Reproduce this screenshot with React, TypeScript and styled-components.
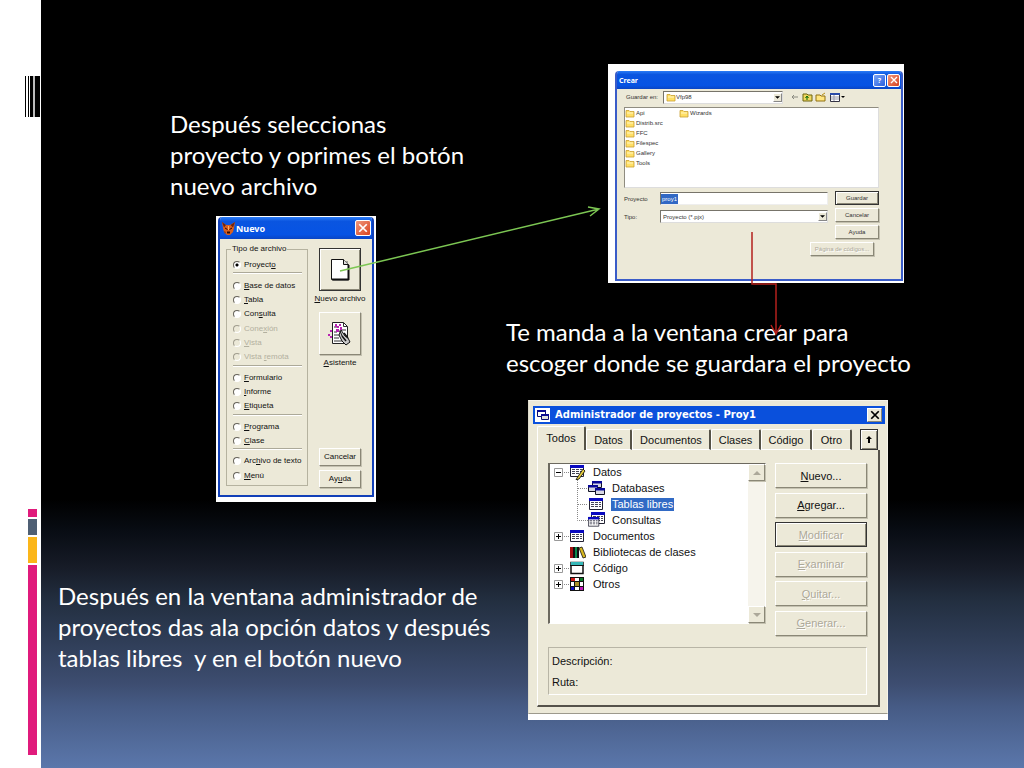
import React from "react";
import styled, { createGlobalStyle, css } from "styled-components";

const face = "#ece9d8";
const ui = '"Liberation Sans", Arial, sans-serif';

const Global = createGlobalStyle`
  *, *::before, *::after { box-sizing: border-box; }
  body { margin: 0; background: #000; }
  button, input, select { font: inherit; color: inherit; margin: 0; }
  ul { list-style: none; margin: 0; padding: 0; }
  u { text-underline-offset: 1px; }
`;

const Slide = styled.div`
  display: flex;
  min-height: 100vh;
  background: linear-gradient(#000 0%, #000 65%, #080c13 69%, #171c28 74%, #222e3f 78%, #2e3c55 83%, #3d4d70 89%, #465b85 92%, #5b77ab 100%);
`;
const Rail = styled.aside`
  display: flex;
  flex-direction: column;
  flex: 0 0 41px;
  padding: 76px 0 13px 25px;
  background: #fff;
`;
const Barcode = styled.svg`
  display: block;
  width: 16px;
  height: 41px;
`;
const Stripes = styled.div`
  display: flex;
  flex-direction: column;
  gap: 2px;
  width: 9px;
  margin: auto 0 0 3px;
`;
const Stripe = styled.div<{ $color: string; $h: number }>`
  height: ${(p) => p.$h}px;
  background: ${(p) => p.$color};
`;
const Stage = styled.main`
  position: relative;
  flex: 1;
  display: grid;
  grid-template-columns: 465fr 518fr;
  align-items: start;
`;
const Column = styled.section<{ $top: number }>`
  display: flex;
  flex-direction: column;
  align-items: flex-start;
  padding-top: ${(p) => p.$top}px;
`;
const Note = styled.p<{ $left?: number; $top?: number }>`
  margin: ${(p) => p.$top ?? 0}px 0 0 ${(p) => p.$left ?? 0}px;
  color: #fff;
  font: 24px/31px Lato, "Open Sans", sans-serif;
  white-space: pre;
`;
const Arrows = styled.svg`
  position: absolute;
  inset: 0;
  width: 100%;
  height: 100%;
  pointer-events: none;
`;

/* Shared window parts */
const raised = css`
  border: 1px solid;
  border-color: #fff #8a8776 #8a8776 #fff;
  box-shadow: 1px 1px 0 #c4c1b0;
`;
const Button = styled.button<{ $h: number; $w?: number; $main?: boolean }>`
  display: flex;
  align-items: center;
  justify-content: center;
  flex: none;
  height: ${(p) => p.$h}px;
  width: ${(p) => (p.$w ? `${p.$w}px` : "100%")};
  padding: 0;
  background: ${face};
  white-space: nowrap;
  ${raised}
  ${(p) => p.$main && "border-color: #333; box-shadow: inset 1px 1px 0 #fff, inset -1px -1px 0 #8a8776;"}
  &:disabled { color: #aca899; text-shadow: 1px 1px 0 #fff; }
`;
const TitleBar = styled.header<{ $h: number; $size: number }>`
  display: flex;
  align-items: center;
  height: ${(p) => p.$h}px;
  color: #fff;
  background: linear-gradient(#2a7bf5 0%, #0a55e0 20%, #0653e4 80%, #0a45c4 100%);
  font: bold ${(p) => p.$size}px/1 "Noto Sans", sans-serif;
`;
const Title = styled.h2`
  flex: 1;
  margin: 0;
  font: inherit;
`;
const XpKey = styled.button<{ $red?: boolean; $s: number }>`
  display: grid;
  place-items: center;
  width: ${(p) => p.$s}px;
  height: ${(p) => p.$s}px;
  padding: 0;
  border: 1px solid #fff;
  border-radius: 2px;
  background: ${(p) => (p.$red ? "linear-gradient(135deg, #f0977c, #d8431f)" : "linear-gradient(135deg, #7ba6f5, #2a5fe0)")};
  color: #fff;
`;

/* Nuevo */
const NewShot = styled.div`
  width: 160px;
  margin: 15px 0 0 175px;
  padding: 1px 2px 5px;
  background: #fff;
`;
const NewWindow = styled.article`
  border: 2px solid #1240b8;
  border-top: 0;
  border-radius: 4px 4px 0 0;
  overflow: hidden;
  background: ${face};
  font: 8px/10px ${ui};
  color: #111;
`;
const NewTitle = styled(TitleBar)`
  padding: 0 1px 0 2px;
  gap: 1px;
`;
const NewBody = styled.div`
  display: flex;
  justify-content: space-between;
  height: 256px;
  padding: 5px 5px 7px 6px;
`;
const Kinds = styled.fieldset`
  display: flex;
  flex-direction: column;
  width: 82px;
  height: 242px;
  margin: 0;
  padding: 4px 5px 2px 6px;
  border: 1px solid #b5b29f;
`;
const KindsLegend = styled.legend`
  margin-left: -2px;
  padding: 0 1px;
`;
const KindGroup = styled.div<{ $n: number }>`
  display: flex;
  flex-direction: column;
  flex: ${(p) => p.$n} 0 auto;
  & + & { padding-top: 5px; border-top: 1px solid #aca999; box-shadow: inset 0 1px 0 #fff; }
`;
const Kind = styled.label<{ $off?: boolean }>`
  display: flex;
  align-items: center;
  flex: 1 0 14px;
  gap: 3px;
  white-space: nowrap;
  color: ${(p) => (p.$off ? "#b3b09f" : "#111")};
`;
const Radio = styled.input`
  appearance: none;
  flex: none;
  width: 8px;
  height: 8px;
  border: 1px solid;
  border-color: #66635a #fff #fff #66635a;
  border-radius: 50%;
  background: #fff;
  &:checked { background: radial-gradient(circle, #000 0 1px, #fff 2px); }
  &:disabled { background: ${face}; border-color: #a09d8e #fff #fff #a09d8e; }
`;
const NewSide = styled.div`
  display: flex;
  flex-direction: column;
  align-items: center;
  width: 54px;
  padding-top: 4px;
`;
const BigButton = styled(Button)`
  width: 42px;
`;
const Caption = styled.span`
  margin: 3px 0 8px;
  white-space: nowrap;
`;
const SideFoot = styled.div`
  display: flex;
  flex-direction: column;
  gap: 4px;
  margin-top: auto;
`;

/* Crear */
const CreateShot = styled.div`
  width: 296px;
  margin-left: 102px;
  padding: 7px 1px 2px 7px;
  background: #fff;
`;
const CreateWindow = styled.article`
  border: 2px solid #3a5cc8;
  border-top: 0;
  border-radius: 4px 4px 0 0;
  overflow: hidden;
  background: ${face};
  font: 6px/10px ${ui};
  color: #333;
`;
const CreateTitle = styled(TitleBar)`
  gap: 1px;
  padding: 0 1px 0 2px;
`;
const CreateBody = styled.div`
  display: flex;
  flex-direction: column;
  height: 190px;
  padding: 1px 22px 0 7px;
`;
const LookRow = styled.div`
  display: flex;
  align-items: center;
  height: 14px;
`;
const LookLabel = styled.label`
  width: 39px;
  padding-left: 2px;
`;
const Combo = styled.div`
  display: flex;
  align-items: center;
  height: 13px;
  padding-left: 2px;
  background: #fff;
  border: 1px solid;
  border-color: #77746a #ddd #ddd #77746a;
`;
const LookCombo = styled(Combo)`
  width: 120px;
  margin-right: 8px;
`;
const Select = styled.select`
  appearance: none;
  flex: 1;
  min-width: 0;
  height: 10px;
  padding: 0;
  border: 0;
  background: none;
`;
const Drop = styled.span`
  display: grid;
  place-items: center;
  width: 9px;
  height: 9px;
  background: ${face};
  border: 1px solid;
  border-color: #fff #888 #888 #fff;
`;
const Tools = styled.svg`
  width: 56px;
  height: 12px;
`;
const Files = styled.ul`
  display: grid;
  grid-template-columns: 54px 1fr;
  grid-template-rows: repeat(6, 10px);
  grid-auto-flow: column;
  height: 81px;
  margin-top: 3px;
  padding: 0;
  background: #fff;
  border: 1px solid;
  border-color: #8f8c80 #ddd #ddd #8f8c80;
`;
const FileItem = styled.li`
  display: flex;
  align-items: center;
  gap: 1px;
`;
const Form = styled.div`
  display: flex;
  justify-content: space-between;
  margin-top: 3px;
`;
const Fields = styled.div`
  display: flex;
  flex-direction: column;
  gap: 5px;
  padding-top: 1px;
`;
const Field = styled.div`
  display: flex;
  align-items: center;
`;
const FieldLabel = styled.label`
  width: 36px;
`;
const NameBox = styled.div`
  display: flex;
  align-items: center;
  width: 168px;
  height: 13px;
  background: #fff;
  border: 1px solid;
  border-color: #77746a #eee #eee #77746a;
`;
const NameInput = styled.input`
  width: 17px;
  height: 10px;
  padding: 0 1px;
  border: 0;
  background: #3168c4;
  color: #fff;
`;
const TypeCombo = styled(Combo)`
  width: 168px;
`;
const Keys = styled.div`
  display: flex;
  flex-direction: column;
  gap: 3px;
  width: 44px;
`;
const PageRow = styled.div`
  display: flex;
  justify-content: flex-end;
  padding: 3px 5px 0 0;
`;

/* Administrador de proyectos */
const ManagerShot = styled.div`
  width: 360px;
  margin: 22px 0 0 22px;
  padding-bottom: 6px;
  background: #fff;
`;
const ManagerWindow = styled.article`
  height: 314px;
  padding: 5px 2px 0 4px;
  background: ${face};
  border: 1px solid;
  border-color: #f6f4ea #f6f4ea #9c998c #dedbcc;
  font: 11px/14px ${ui};
  color: #111;
`;
const ManagerTitle = styled(TitleBar)`
  gap: 5px;
  padding: 0 3px 0 2px;
  background: #0a50dc;
  font-family: "DejaVu Sans", Verdana, sans-serif;
`;
const CloseKey = styled.button`
  display: grid;
  place-items: center;
  width: 15px;
  height: 14px;
  padding: 0;
  background: ${face};
  ${raised}
  box-shadow: none;
`;
const Tabs = styled.nav`
  display: flex;
  align-items: flex-end;
  height: 26px;
  padding: 2px 7px 0 4px;
`;
const Tab = styled.button<{ $on?: boolean; $w: number }>`
  width: ${(p) => p.$w}px;
  height: ${(p) => (p.$on ? 24 : 21)}px;
  padding: 0 0 ${(p) => (p.$on ? 1 : 0)}px;
  background: ${face};
  border: 1px solid #fff;
  border-right: 2px solid #555247;
  border-bottom: ${(p) => (p.$on ? 0 : 1)}px solid #fff;
  border-radius: 2px 2px 0 0;
`;
const Pin = styled(Button)`
  margin-left: auto;
`;
const Pane = styled.div`
  height: 257px;
  margin: 0 5px 0 4px;
  padding: 13px 11px 0 10px;
  border: solid;
  border-width: 0 2px 2px 1px;
  border-color: #fff #55524a #55524a #fff;
`;
const PaneTop = styled.div`
  display: flex;
  justify-content: space-between;
  height: 173px;
`;
const TreeBox = styled.div`
  display: flex;
  width: 218px;
  height: 161px;
  background: #fff;
  border: 1px solid;
  border-color: #6c695f #fff #fff #6c695f;
  border-left-width: 2px;
`;
const Tree = styled.ul`
  flex: 1;
  padding-left: 4px;
`;
const Node = styled.li`
  display: flex;
  align-items: center;
  height: 16px;
`;
const NodeLines = styled.svg`
  flex: none;
  height: 16px;
`;
const NodeIcon = styled.svg`
  flex: none;
  width: 17px;
  height: 16px;
  margin-right: 6px;
`;
const NodeName = styled.span<{ $on?: boolean }>`
  padding: 0 1px;
  line-height: 13px;
  white-space: nowrap;
  ${(p) => p.$on && "background: #316ac5; color: #fff;"}
`;
const Scroll = styled.div`
  display: flex;
  flex-direction: column;
  justify-content: space-between;
  width: 17px;
  background: #f6f4ec;
`;
const Commands = styled.div`
  display: flex;
  flex-direction: column;
  justify-content: space-between;
  width: 92px;
`;
const Info = styled.dl`
  display: flex;
  flex-direction: column;
  gap: 7px;
  height: 48px;
  margin: 11px 0 0;
  padding: 6px 3px 0;
  border: 1px solid;
  border-color: #b8b5a6 #fff #fff #b8b5a6;
`;
const Term = styled.dt`
  margin: 0;
`;

const Cross = ({ s, c = "#fff" }: { s: number; c?: string }) => (
  <svg width={s} height={s} viewBox="0 0 8 8" aria-hidden="true">
    <path d="M1 1 7 7M7 1 1 7" stroke={c} strokeWidth="1.4" fill="none" />
  </svg>
);
const Folder = () => (
  <svg width="10" height="9" viewBox="0 0 10 9" aria-hidden="true">
    <path d="M1 1.500h3l1 1h4v5.500H1z" fill="#ffdf66" stroke="#c9a030" strokeWidth=".8" />
    <path d="M2 4h6" stroke="#fff6c4" />
  </svg>
);
const Triangle = ({ up, c = "#000", s = 5 }: { up?: boolean; c?: string; s?: number }) => (
  <svg width={s} height={s} viewBox="0 0 8 8" aria-hidden="true">
    <path d={up ? "M0 6 4 2 8 6z" : "M0 2h8L4 6z"} fill={c} />
  </svg>
);
const Fox = () => (
  <svg width="13" height="13" viewBox="0 0 13 13" aria-hidden="true">
    <path d="M0 0 4 3h4l5-3-1 6-1 4-3 3H5L2 10 1 6z" fill="#d9601f" />
    <path d="M0 0 4 3 2 5.500zM13 0 8.500 3 11 5.500z" fill="#6c2410" />
    <path d="M3 6l2.500 1.500M10 6 7.500 7.500" stroke="#300" />
    <path d="M5 9.500h3v2H5z" fill="#2a0a04" />
    <path d="M6 4h1v4H6z" fill="#ffb05a" />
    <path d="M2 9l2 1-1 2z" fill="#8a3010" />
  </svg>
);
const Page = () => (
  <svg width="21" height="24" viewBox="0 0 21 24" aria-hidden="true">
    <path d="M3 3h15v20H3z" fill="#777" opacity=".6" />
    <path d="M1.500 1.500h12l5 5v15h-17z" fill="#fff" stroke="#111" />
    <path d="M18.500 7v15M2 21.500h17" stroke="#111" strokeWidth="2" />
    <path d="M13.500 1.500v5h5" fill="#ddd" stroke="#111" />
  </svg>
);
const Wizard = () => (
  <svg width="26" height="26" viewBox="0 0 26 26" aria-hidden="true">
    <path d="M5.500 1.500h11l4 4v17h-15z" fill="#fff" stroke="#222" />
    <path d="M16.500 1.500v4h4M7 6h5M7 11h3M7 14h5M7 17h5M7 20h8M14 9h5" stroke="#333" fill="none" />
    <path d="M11 10c2-1 3 2 4 5M14 9l4 6 3 2 2 4-4 3-4-4-3-6z" fill="#c8c8c8" stroke="#111" />
    <path d="M17 12l4 5M15 15l4 5" stroke="#111" strokeWidth="1.500" />
    <path d="M1 13h2v2H1zM3 9h2v2H3zM8 3h2v3H8zM12 3h2v2h-2zM13 6h2v3h-2zM9 8h3v3H9zM3 15h2v2H3zM10 5h2v2h-2z" fill="#b823b0" />
  </svg>
);

const Grid = ({ x, y }: { x: number; y: number }) => (
  <g transform={`translate(${x} ${y})`}>
    <path d="M.5.5h13v11H.5z" fill="#fff" stroke="#223" />
    <path d="M0 0h14v3H0z" fill="#0a0ac0" />
    <path d="M2 4.500h3M6 4.500h3M10 4.500h2M2 6.500h3M6 6.500h3M10 6.500h2M2 8.500h3M6 8.500h3M10 8.500h2" stroke="#445" />
  </g>
);
const Mini = ({ x, y }: { x: number; y: number }) => (
  <g transform={`translate(${x} ${y})`}>
    <path d="M.5.5h9v6h-9z" fill="#d8d8e4" stroke="#112" />
    <path d="M0 0h10v2.500H0z" fill="#0a0a98" />
  </g>
);
const icons: Record<string, React.ReactNode> = {
  data: (<><Grid x={1} y={1} /><path d="M8 14l6-9 2 2-6 8-3 1z" fill="#e8d040" stroke="#000" strokeWidth=".8" /></>),
  db: (<><Mini x={4} y={1} /><Mini x={0} y={5} /><Mini x={7} y={8} /></>),
  table: <Grid x={1} y={2} />,
  query: (<><Grid x={3} y={0} /><g transform="translate(0 5) scale(.8)"><Grid x={0} y={0} /></g></>),
  books: (
    <>
      <path d="M1 3h3v11H1z" fill="#a01010" /><path d="M4 3h2v11H4z" fill="#111" />
      <path d="M6 3h3v11H6z" fill="#0a8a4a" /><path d="M8 3h2v11H8z" fill="#111" />
      <path d="M10 4l3-1 4 10-3 1z" fill="#d8b820" stroke="#111" strokeWidth=".8" />
    </>
  ),
  code: (<><path d="M2 2.500h12v11H2z" fill="#fff" stroke="#111" strokeWidth="1.500" /><path d="M2 2h12v3H2z" fill="#35b8b8" /><path d="M1 5.500h14" stroke="#111" /></>),
  other: (
    <>
      <path d="M1 1h14v14H1z" fill="#111" />
      <path d="M2 2h4v3H2z" fill="#d01818" /><path d="M6 2h4v3H6zM2 6h3v4H2zM11 6h3v4h-3zM6 11h4v3H6z" fill="#fff" />
      <path d="M11 2h3v3h-3z" fill="#0a7a28" /><path d="M6 6h4v4H6z" fill="#a89028" />
      <path d="M2 11h3v3H2z" fill="#1010c0" /><path d="M11 11h3v3h-3z" fill="#c018b8" />
    </>
  ),
};
const nodes: { name: string; icon: string; box?: "+" | "-"; child?: boolean; last?: boolean; on?: boolean }[] = [
  { name: "Datos", icon: "data", box: "-" },
  { name: "Databases", icon: "db", child: true },
  { name: "Tablas libres", icon: "table", child: true, on: true },
  { name: "Consultas", icon: "query", child: true, last: true },
  { name: "Documentos", icon: "table", box: "+" },
  { name: "Bibliotecas de clases", icon: "books" },
  { name: "Código", icon: "code", box: "+" },
  { name: "Otros", icon: "other", box: "+" },
];

const kinds: { t: [string, string, string]; off?: boolean }[][] = [
  [{ t: ["Proyect", "o", ""] }],
  [
    { t: ["", "B", "ase de datos"] },
    { t: ["", "T", "abla"] },
    { t: ["Con", "s", "ulta"] },
    { t: ["Cone", "x", "ión"], off: true },
    { t: ["", "V", "ista"], off: true },
    { t: ["Vista ", "r", "emota"], off: true },
  ],
  [{ t: ["", "F", "ormulario"] }, { t: ["", "I", "nforme"] }, { t: ["", "E", "tiqueta"] }],
  [{ t: ["", "P", "rograma"] }, { t: ["", "C", "lase"] }],
  [{ t: ["Arc", "h", "ivo de texto"] }, { t: ["", "M", "enú"] }],
];

const NewDialog = () => (
  <NewShot>
    <NewWindow>
      <NewTitle $h={22} $size={9}>
        <Fox />
        <Title>Nuevo</Title>
        <XpKey $red $s={16} aria-label="Cerrar"><Cross s={10} /></XpKey>
      </NewTitle>
      <NewBody>
        <Kinds>
          <KindsLegend>Tipo de archivo</KindsLegend>
          {kinds.map((g, i) => (
            <KindGroup key={i} $n={g.length}>
              {g.map(({ t, off }) => (
                <Kind key={t.join("")} $off={off}>
                  <Radio type="radio" name="tipo" defaultChecked={i === 0} disabled={off} />
                  <span>{t[0]}<u>{t[1]}</u>{t[2]}</span>
                </Kind>
              ))}
            </KindGroup>
          ))}
        </Kinds>
        <NewSide>
          <BigButton $h={43} $main aria-label="Nuevo archivo"><Page /></BigButton>
          <Caption><u>N</u>uevo archivo</Caption>
          <BigButton $h={43} aria-label="Asistente"><Wizard /></BigButton>
          <Caption><u>A</u>sistente</Caption>
          <SideFoot>
            <Button $h={18} $w={42}>Cancelar</Button>
            <Button $h={18} $w={42}><span>Ay<u>u</u>da</span></Button>
          </SideFoot>
        </NewSide>
      </NewBody>
    </NewWindow>
  </NewShot>
);

const CreateDialog = () => (
  <CreateShot>
    <CreateWindow>
      <CreateTitle $h={18} $size={7}>
        <Title>Crear</Title>
        <XpKey $s={13} aria-label="Ayuda">?</XpKey>
        <XpKey $red $s={13} aria-label="Cerrar"><Cross s={8} /></XpKey>
      </CreateTitle>
      <CreateBody>
        <LookRow>
          <LookLabel htmlFor="look">Guardar en:</LookLabel>
          <LookCombo>
            <Folder />
            <Select id="look"><option>Vfp98</option></Select>
            <Drop><Triangle /></Drop>
          </LookCombo>
          <Tools viewBox="0 0 56 12" aria-hidden="true">
            <path d="M1 6h6M3 4 1 6l2 2" stroke="#8a8a80" fill="none" />
            <path d="M12 3h4l1 1h4v6h-9z" fill="#f0d860" stroke="#6c6410" />
            <path d="M16 9V6M14.500 7 16 5l1.500 2" stroke="#060" fill="none" />
            <path d="M25 4h4l1 1h4v5h-9z" fill="#ffe680" stroke="#907010" />
            <path d="M31 4l3-2" stroke="#b89010" />
            <path d="M39.500 2.500h9v8h-9z" fill="#fff" stroke="#334" />
            <path d="M39 2h10v2H39z" fill="#2a4aa8" />
            <path d="M40 6h8M40 8h8M43 4v6" stroke="#99a" />
            <path d="M50 5h4l-2 2z" fill="#000" />
          </Tools>
        </LookRow>
        <Files>
          {["Api", "Distrib.src", "FFC", "Filespec", "Gallery", "Tools", "Wizards"].map((f) => (
            <FileItem key={f}><Folder />{f}</FileItem>
          ))}
        </Files>
        <Form>
          <Fields>
            <Field>
              <FieldLabel htmlFor="name">Proyecto</FieldLabel>
              <NameBox><NameInput id="name" defaultValue="proy1" /></NameBox>
            </Field>
            <Field>
              <FieldLabel htmlFor="type">Tipo:</FieldLabel>
              <TypeCombo>
                <Select id="type"><option>Proyecto (*.pjx)</option></Select>
                <Drop><Triangle /></Drop>
              </TypeCombo>
            </Field>
          </Fields>
          <Keys>
            <Button $h={14} $main>Guardar</Button>
            <Button $h={14}>Cancelar</Button>
            <Button $h={14}>Ayuda</Button>
          </Keys>
        </Form>
        <PageRow><Button $h={14} $w={64} disabled>Página de códigos...</Button></PageRow>
      </CreateBody>
    </CreateWindow>
  </CreateShot>
);

const commands: [string, string, boolean][] = [
  ["N", "uevo...", false], ["A", "gregar...", false], ["M", "odificar", true],
  ["E", "xaminar", true], ["Q", "uitar...", true], ["G", "enerar...", true],
];
const tabs: [string, number][] = [["Todos", 49], ["Datos", 46], ["Documentos", 79], ["Clases", 50], ["Código", 51], ["Otro", 40]];

const ManagerDialog = () => (
  <ManagerShot>
    <ManagerWindow>
      <ManagerTitle $h={18} $size={10}>
        <svg width="15" height="14" viewBox="0 0 15 14" aria-hidden="true">
          <path d="M0 0h15v14H0z" fill="#fff" />
          <path d="M2.500 2.500h8v6h-8z" fill="#fff" stroke="#0a0a70" /><path d="M2 2h9v2H2z" fill="#0a0a90" />
          <path d="M6.500 6.500h7v5h-7z" fill="#ddd" stroke="#0a0a70" /><path d="M6 6h8v2H6z" fill="#0a0a90" />
        </svg>
        <Title>Administrador de proyectos - Proy1</Title>
        <CloseKey aria-label="Cerrar"><Cross s={10} c="#000" /></CloseKey>
      </ManagerTitle>
      <Tabs>
        {tabs.map(([t, w], i) => <Tab key={t} $w={w} $on={i === 0}>{t}</Tab>)}
        <Pin $h={21} $w={18} $main aria-label="Contraer">
          <svg width="8" height="9" viewBox="0 0 8 9" aria-hidden="true"><path d="M4 1 7 4H5v4H3V4H1z" fill="#000" /></svg>
        </Pin>
      </Tabs>
      <Pane>
        <PaneTop>
          <TreeBox>
            <Tree>
              {nodes.map((n) => (
                <Node key={n.name}>
                  <NodeLines width={n.child ? 34 : 15} viewBox={n.child ? "0 0 34 16" : "0 0 15 16"} aria-hidden="true">
                    {n.child && <path d={n.last ? "M23.500 0v8.500H34" : "M23.500 0v16M24 8.500h10"} stroke="#888" strokeDasharray="1 1" fill="none" />}
                    {n.box && (
                      <>
                        <path d="M10 8.500h5" stroke="#888" strokeDasharray="1 1" />
                        <path d="M.5 4.500h8v8h-8z" fill="#fff" stroke="#999" />
                        <path d={n.box === "+" ? "M2 8.500h5M4.500 6v5" : "M2 8.500h5"} stroke="#000" />
                      </>
                    )}
                  </NodeLines>
                  <NodeIcon viewBox="0 0 17 16" aria-hidden="true">{icons[n.icon]}</NodeIcon>
                  <NodeName $on={n.on}>{n.name}</NodeName>
                </Node>
              ))}
            </Tree>
            <Scroll>
              <Button $h={17} $w={17} aria-label="Subir"><Triangle up c="#aca899" s={8} /></Button>
              <Button $h={17} $w={17} aria-label="Bajar"><Triangle c="#aca899" s={8} /></Button>
            </Scroll>
          </TreeBox>
          <Commands>
            {commands.map(([k, t, off]) => (
              <Button key={k} $h={25} $main={k === "M"} disabled={off}><u>{k}</u>{t}</Button>
            ))}
          </Commands>
        </PaneTop>
        <Info>
          <Term>Descripción:</Term>
          <Term>Ruta:</Term>
        </Info>
      </Pane>
    </ManagerWindow>
  </ManagerShot>
);

export default function App() {
  return (
    <>
      <Global />
      <Slide>
        <Rail>
          <Barcode viewBox="0 0 16 41" aria-hidden="true">
            <path d="M0 0h1v41H0zM3 0h1v41H3zM5 0h3v41H5zM10 0h5v41h-5z" fill="#000" />
            <path d="M8 0h2v41H8z" fill="#bbb" />
          </Barcode>
          <Stripes>
            <Stripe $color="#e01b7c" $h={8} />
            <Stripe $color="#4f5f74" $h={16} />
            <Stripe $color="#fbb61a" $h={26} />
            <Stripe $color="#e01b7c" $h={190} />
          </Stripes>
        </Rail>
        <Stage>
          <Column $top={108}>
            <Note $left={129}>{"Después seleccionas\nproyecto y oprimes el botón\nnuevo archivo"}</Note>
            <NewDialog />
            <Note $left={17} $top={78}>{"Después en la ventana administrador de\nproyectos das ala opción datos y después\ntablas libres  y en el botón nuevo"}</Note>
          </Column>
          <Column $top={64}>
            <CreateDialog />
            <Note $top={33}>{"Te manda a la ventana crear para\nescoger donde se guardara el proyecto"}</Note>
            <ManagerDialog />
          </Column>
          <Arrows viewBox="0 0 983 768" preserveAspectRatio="none" aria-hidden="true">
            <path d="M299 271 558 209M547 207l11 2-9 7" stroke="#7cc653" strokeWidth="1.500" fill="none" />
            <path d="M711 232v52h24v50M730 325l5 9 5-9" stroke="#b3201c" strokeWidth="1.500" fill="none" />
          </Arrows>
        </Stage>
      </Slide>
    </>
  );
}
